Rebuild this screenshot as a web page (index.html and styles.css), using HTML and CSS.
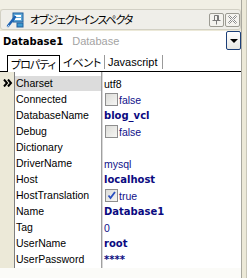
FILE: index.html
```html
<!DOCTYPE html>
<html lang="ja">
<head>
<meta charset="utf-8">
<link rel="stylesheet" href="styles.css">
</head>
<body>
<div class="win">
  <div class="panel">
    <div class="topstrip"></div>
    <div class="titlebar">
      <svg class="appicon" width="18" height="16" viewBox="0 0 18 16">
        <rect x="7" y="1" width="10" height="9" fill="#5fa8d8" stroke="#1f5f9f"/>
        <rect x="9" y="3" width="6" height="2" fill="#ffffff"/>
        <rect x="9" y="6" width="6" height="2" fill="#ffffff"/>
        <rect x="11" y="11" width="6" height="4" fill="#3c9ad0" stroke="#1f5f9f"/>
        <path d="M2 14 L9 5" stroke="#1f64b4" stroke-width="2.5" stroke-linecap="round"/>
        <path d="M1.5 15 L3 13" stroke="#d8e8f8" stroke-width="1"/>
      </svg>
      <span class="title">オブジェクトインスペクタ</span>
      <span class="tbtns">
        <span class="tbtn">
          <svg width="9" height="10" viewBox="0 0 9 10"><path d="M2.5 0.5 H6.5 V5.5 H2.5 Z M0.5 5.5 H8.5 M4.5 5.5 V9.5 M5.5 1 V5" fill="none" stroke="#7a7a7a"/></svg>
        </span>
        <span class="tbtn">
          <svg width="9" height="9" viewBox="0 0 9 9"><path d="M0.5 1.5 L1.5 0.5 L4.5 3.5 L7.5 0.5 L8.5 1.5 L5.5 4.5 L8.5 7.5 L7.5 8.5 L4.5 5.5 L1.5 8.5 L0.5 7.5 L3.5 4.5 Z" fill="#fff" stroke="#8a8a8a"/></svg>
        </span>
      </span>
    </div>
    <div class="combo">
      <span class="objname">Database1</span>
      <span class="objtype">Database</span>
      <span class="dropbtn"><span class="tri"></span></span>
    </div>
    <div class="tabs">
      <span class="tab active">プロパティ</span>
      <span class="tab">イベント</span>
      <span class="tab latin">Javascript</span>
    </div>
    <div class="grid">
      <div class="row">
        <span class="gut"><svg width="10" height="8" viewBox="0 0 10 8"><path d="M1 0.5 L4 4 L1 7.5 M5 0.5 L8 4 L5 7.5" fill="none" stroke="#000" stroke-width="2"/></svg></span>
        <span class="name sel">Charset</span>
        <span class="val plain">utf8</span>
      </div>
      <div class="row">
        <span class="gut"></span>
        <span class="name">Connected</span>
        <span class="val"><span class="chk"></span>false</span>
      </div>
      <div class="row">
        <span class="gut"></span>
        <span class="name">DatabaseName</span>
        <span class="val bold">blog_vcl</span>
      </div>
      <div class="row">
        <span class="gut"></span>
        <span class="name">Debug</span>
        <span class="val"><span class="chk"></span>false</span>
      </div>
      <div class="row">
        <span class="gut"></span>
        <span class="name">Dictionary</span>
        <span class="val"></span>
      </div>
      <div class="row">
        <span class="gut"></span>
        <span class="name">DriverName</span>
        <span class="val">mysql</span>
      </div>
      <div class="row">
        <span class="gut"></span>
        <span class="name">Host</span>
        <span class="val bold">localhost</span>
      </div>
      <div class="row">
        <span class="gut"></span>
        <span class="name">HostTranslation</span>
        <span class="val"><span class="chk on"><svg width="9" height="9" viewBox="0 0 9 9"><path d="M1.5 4.5 L3.5 7 L8 1" fill="none" stroke="#2a4fc0" stroke-width="1.8"/></svg></span>true</span>
      </div>
      <div class="row">
        <span class="gut"></span>
        <span class="name">Name</span>
        <span class="val bold">Database1</span>
      </div>
      <div class="row">
        <span class="gut"></span>
        <span class="name">Tag</span>
        <span class="val">0</span>
      </div>
      <div class="row">
        <span class="gut"></span>
        <span class="name">UserName</span>
        <span class="val bold">root</span>
      </div>
      <div class="row">
        <span class="gut"></span>
        <span class="name">UserPassword</span>
        <span class="val bold">****</span>
      </div>
    </div>
    <div class="bottom"></div>
  </div>
  <div class="edge"></div>
</div>
</body>
</html>
```

FILE: styles.css
```css
html, body {
  margin: 0;
  padding: 0;
  background: #ece9d8;
}
.win {
  display: flex;
  width: 247px;
  height: 278px;
  overflow: hidden;
}
.panel {
  width: 241px;
  display: flex;
  flex-direction: column;
  border-right: 1px solid #a8a79e;
}
.edge {
  flex: 1;
  background: #ece9d8;
  border-right: 1px solid #c8c6b8;
}
.topstrip {
  height: 9px;
  background: #f1efe4;
}
.titlebar {
  height: 21px;
  box-sizing: border-box;
  border: 1px solid #d2d0c4;
  border-radius: 3px;
  background: #efeee9;
  display: flex;
  align-items: center;
  padding-left: 5px;
}
.appicon {
  display: block;
  margin-top: 1px;
}
.title {
  margin-left: 6px;
  font-family: "Noto Sans CJK JP", sans-serif;
  font-size: 11px;
  letter-spacing: -1.2px;
  font-feature-settings: "palt";
  color: #000;
  line-height: 1;
}
.tbtns {
  margin-left: auto;
  display: flex;
  gap: 1px;
}
.tbtn {
  width: 15px;
  height: 14px;
  box-sizing: border-box;
  border: 1px solid #9c9b93;
  border-radius: 2px;
  background: #f4f3ef;
  display: flex;
  align-items: center;
  justify-content: center;
}
.tbtn svg { display: block; }
.combo {
  margin-top: 1px;
  height: 20px;
  background: #fff;
  display: flex;
  align-items: center;
  padding-left: 3px;
  font-family: "DejaVu Sans", sans-serif;
  font-size: 10px;
}
.objname {
  font-weight: bold;
  color: #000;
}
.objtype {
  margin-left: 9px;
  font-family: "Liberation Sans", sans-serif;
  font-size: 11px;
  color: #a3a3a3;
}
.dropbtn {
  margin-left: auto;
  width: 15px;
  height: 19px;
  box-sizing: border-box;
  border: 1px solid #1c3f78;
  border-radius: 2px;
  background: linear-gradient(#ffffff, #e8e8e4);
  display: flex;
  align-items: center;
  justify-content: center;
  margin-top: -1px;
}
.tri {
  width: 0;
  height: 0;
  border-left: 4px solid transparent;
  border-right: 4px solid transparent;
  border-top: 4px solid #000;
  margin-top: 1px;
}
.tabs {
  height: 21px;
  box-sizing: border-box;
  background: #fff;
  border-bottom: 1px solid #000;
  display: flex;
  align-items: flex-end;
  padding-left: 7px;
  font-family: "Noto Sans CJK JP", sans-serif;
  font-size: 11px;
  letter-spacing: -0.3px;
  font-feature-settings: "palt";
}
.tab {
  height: 14px;
  margin-bottom: 2px;
  display: flex;
  align-items: center;
  padding: 0 3px 0 1px;
  border-right: 1px solid #9a9a9a;
  line-height: 1;
  color: #000;
  white-space: nowrap;
}
.tab.latin {
  font-family: "Liberation Sans", sans-serif;
  font-size: 11px;
  letter-spacing: 0;
  padding: 0 4px 0 3px;
}
.tab.active {
  height: 17px;
  box-sizing: border-box;
  margin-bottom: -1px;
  border: 1px solid #000;
  border-bottom: none;
  background: #fff;
  padding: 0 4px 0 3px;
  margin-right: 2px;
  letter-spacing: -1px;
}
.grid {
  height: 196px;
  box-sizing: border-box;
  padding-top: 4px;
  background: linear-gradient(to right, #ece9d8 0 14px, #7f7f7f 14px 15px, #ffffff 15px 101px, #a0a0a0 101px 102px, #d8d8d8 102px 103px, #ffffff 103px);
  font-family: "Liberation Sans", sans-serif;
  font-size: 10.5px;
}
.row {
  height: 16px;
  display: flex;
}
.gut {
  width: 15px;
  display: flex;
  align-items: center;
  padding-left: 3px;
  box-sizing: border-box;
}
.gut svg { display: block; margin-top: -2px; }
.name {
  width: 86px;
  height: 15px;
  padding-left: 1px;
  box-sizing: border-box;
  line-height: 15px;
  color: #000;
  white-space: nowrap;
  overflow: hidden;
}
.name.sel {
  background: #dcdcdc;
}
.val {
  margin-left: 2px;
  padding-left: 1px;
  display: flex;
  align-items: center;
  height: 15px;
  color: #10108a;
  white-space: nowrap;
}
.val.plain { color: #000; }
.val.bold {
  font-family: "DejaVu Sans", sans-serif;
  font-size: 10px;
  font-weight: bold;
  color: #0a0a80;
}
.chk {
  width: 13px;
  height: 13px;
  box-sizing: border-box;
  border: 1px solid #8e8e8e;
  background: linear-gradient(135deg, #dcdcd8, #f6f6f4);
  margin-left: 1px;
  margin-right: 1px;
  display: flex;
  align-items: center;
  justify-content: center;
}
.chk svg { display: block; }
.bottom {
  flex: 1;
  background: #fbfbf8;
}
```
